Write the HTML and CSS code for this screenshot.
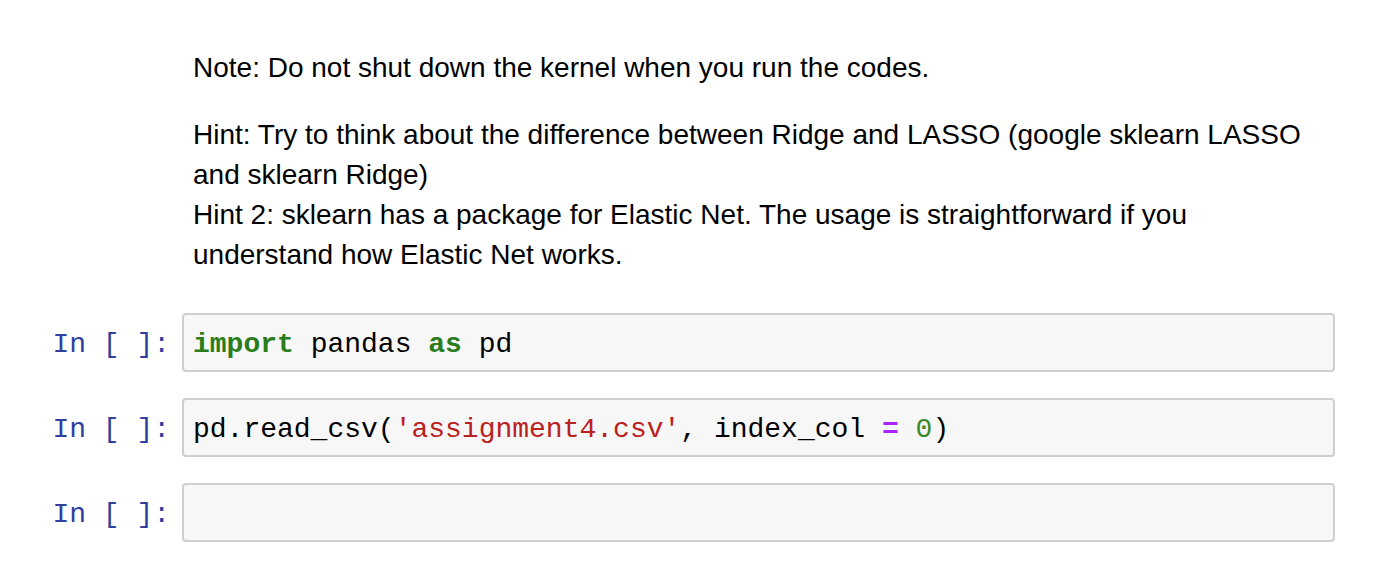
FILE: index.html
```html
<!DOCTYPE html>
<html>
<head>
<meta charset="utf-8">
<link rel="stylesheet" href="styles.css">
</head>
<body>
<div class="notebook">
  <div class="cell markdown">
    <div class="prompt"></div>
    <div class="rendered">
      <p>Note: Do not shut down the kernel when you run the codes.</p>
      <p>Hint: Try to think about the difference between Ridge and LASSO (google sklearn LASSO and sklearn Ridge)<br>Hint 2: sklearn has a package for Elastic Net. The usage is straightforward if you understand how Elastic Net works.</p>
    </div>
  </div>
  <div class="cell code">
    <div class="prompt">In&nbsp;[&nbsp;]:</div>
    <div class="input"><pre><span class="kw">import</span> pandas <span class="kw">as</span> pd</pre></div>
  </div>
  <div class="cell code">
    <div class="prompt">In&nbsp;[&nbsp;]:</div>
    <div class="input"><pre>pd.read_csv(<span class="str">'assignment4.csv'</span>, index_col <span class="op">=</span> <span class="num">0</span>)</pre></div>
  </div>
  <div class="cell code">
    <div class="prompt">In&nbsp;[&nbsp;]:</div>
    <div class="input"><pre> </pre></div>
  </div>
</div>
</body>
</html>
```

FILE: styles.css
```css
html, body {
  margin: 0;
  padding: 0;
  background: #ffffff;
}

.notebook {
  padding-top: 48px;
  width: 1335px;
}

.cell {
  display: flex;
  align-items: flex-start;
}

.prompt {
  flex: 0 0 182px;
  box-sizing: border-box;
  padding-right: 12px;
  text-align: right;
  font-family: "Liberation Mono", monospace;
  font-size: 28px;
  line-height: 39px;
  color: #303f9f;
  padding-top: 12px;
}

.markdown {
  margin-bottom: 11px;
}

.rendered {
  flex: 1;
  padding-left: 11px;
  padding-right: 10px;
  font-family: "Liberation Sans", Arial, sans-serif;
  font-size: 28px;
  line-height: 40px;
  color: #000000;
}

.rendered p {
  margin: 0 0 27px 0;
}

.code {
  margin-bottom: 26px;
}

.input {
  flex: 1;
  min-width: 0;
  border: 2px solid #cfcfcf;
  border-radius: 4px;
  background: #f7f7f7;
  padding: 10px 9px 6px 9px;
}

.input pre {
  margin: 0;
  font-family: "Liberation Mono", monospace;
  font-size: 28px;
  line-height: 39px;
  color: #000000;
  min-height: 39px;
}

.kw {
  color: #2a7d1c;
  font-weight: bold;
}

.str {
  color: #ba2121;
}

.op {
  color: #aa22ff;
  font-weight: bold;
}

.num {
  color: #3b8a25;
}
```
